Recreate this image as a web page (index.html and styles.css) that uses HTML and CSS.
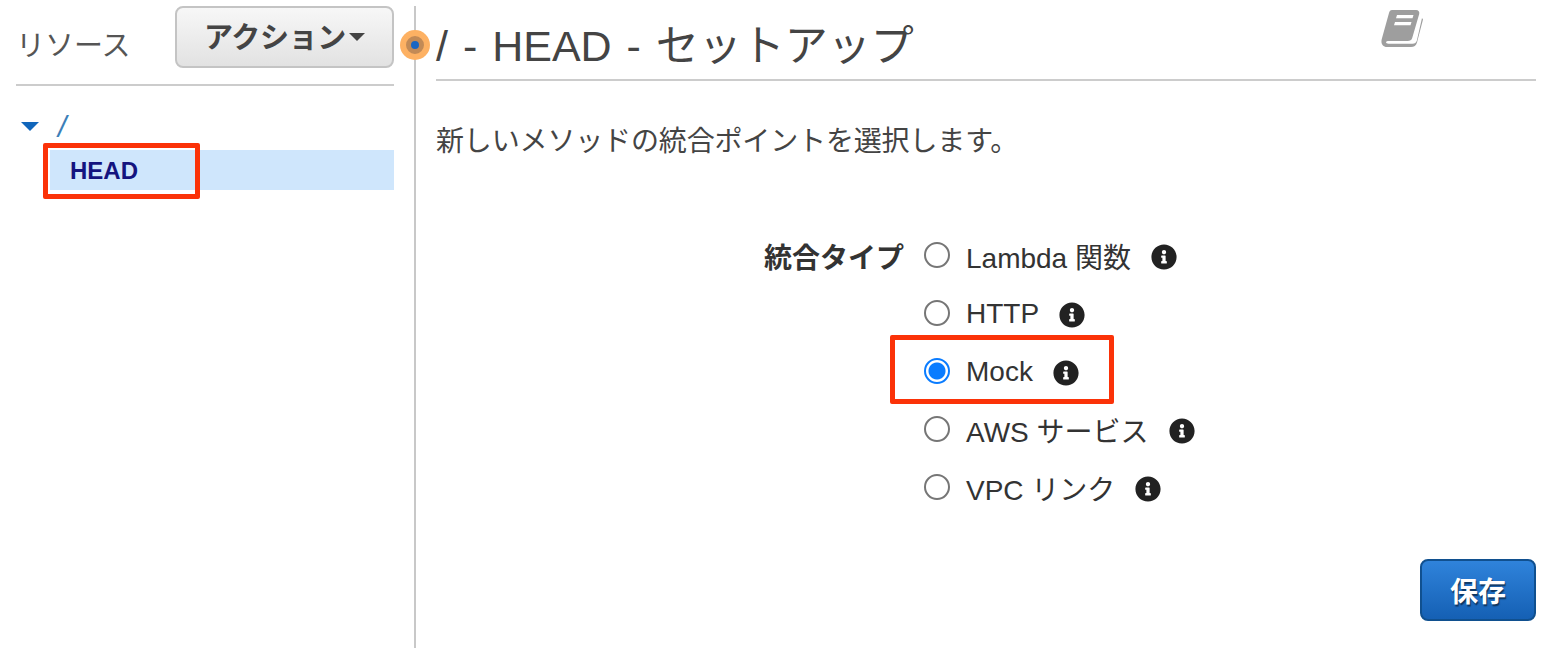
FILE: index.html
```html
<!DOCTYPE html>
<html lang="ja">
<head>
  <meta charset="UTF-8">
  <title>HEAD - セットアップ</title>
  <link rel="stylesheet" href="styles.css">
</head>
<body>
  <svg class="defs" width="0" height="0">
    <symbol id="info" viewBox="0 0 512 512">
      <path d="M256 8C119.043 8 8 119.083 8 256c0 136.997 111.043 248 248 248s248-111.003 248-248C504 119.083 392.957 8 256 8zm0 110c23.196 0 42 18.804 42 42s-18.804 42-42 42-42-18.804-42-42 18.804-42 42-42zm56 254c0 6.627-5.373 12-12 12h-88c-6.627 0-12-5.373-12-12v-24c0-6.627 5.373-12 12-12h12v-64h-12c-6.627 0-12-5.373-12-12v-24c0-6.627 5.373-12 12-12h64c6.627 0 12 5.373 12 12v100h12c6.627 0 12 5.373 12 12v24z"/>
    </symbol>
  </svg>

  <div class="layout">
    <!-- Resources -->
    <div class="sidebar">
      <div class="sidebar-head">
        <span class="sidebar-title">リソース</span>
        <button class="action-btn">アクション<span class="caret"></span></button>
      </div>
      <div class="tree-root">
        <span class="tree-arrow"></span>
        <span class="tree-slash">/</span>
      </div>
      <div class="tree-item">
        <span class="tree-name">HEAD</span>
        <span class="callout callout-head"></span>
      </div>
    </div>

    <!-- Setup -->
    <div class="main">
      <span class="pulse"><span class="pulse-core"></span></span>
      <div class="main-head">
        <h1>/ - HEAD - セットアップ</h1>
        <svg class="book" viewBox="0 0 42 38">
          <path fill="#9e9e9e" d="M11 0h24c2.500 0 3.800 1.800 3.200 4l-7 24c-.7 2.200-2.200 3-4.500 3H7c-2 0-2.500 1.700-1.300 2.300.5.300 1 .4 1.800.4h24c2.400 0 3.600-1 4.300-3L41 8l1 1.500-6 23c-.8 3-3 4.500-6 4.500H6c-3.500 0-6-2.400-5.500-6.500.1-1 .4-2 .7-3L8 3c.5-1.800 1.400-3 3-3z"/>
          <path fill="#fff" d="M16 5h16.500l-1 3.200H15zM14 12h16.500l-1 3.200H13z"/>
        </svg>
      </div>
      <p class="lead">新しいメソッドの統合ポイントを選択します。</p>

      <div class="form">
        <div class="form-label">統合タイプ</div>
        <div class="options">
          <label class="option">
            <input type="radio" name="type">
            <span>Lambda 関数</span>
            <svg class="info"><use href="#info"/></svg>
          </label>
          <label class="option">
            <input type="radio" name="type">
            <span>HTTP</span>
            <svg class="info"><use href="#info"/></svg>
          </label>
          <label class="option">
            <input type="radio" name="type" checked>
            <span>Mock</span>
            <svg class="info"><use href="#info"/></svg>
            <span class="callout callout-mock"></span>
          </label>
          <label class="option">
            <input type="radio" name="type">
            <span>AWS サービス</span>
            <svg class="info"><use href="#info"/></svg>
          </label>
          <label class="option">
            <input type="radio" name="type">
            <span>VPC リンク</span>
            <svg class="info"><use href="#info"/></svg>
          </label>
        </div>
      </div>

      <div class="actions">
        <button class="save-btn">保存</button>
      </div>
    </div>
  </div>
</body>
</html>
```

FILE: styles.css
```css
html, body {
  margin: 0;
  padding: 0;
  height: 100%;
  background: #fff;
  overflow: hidden;
  font-family: "Liberation Sans", "Noto Sans CJK JP", sans-serif;
  color: #444;
}

.defs {
  position: absolute;
}

.layout {
  display: flex;
  height: 648px;
  box-sizing: border-box;
  padding-top: 6px;
}

/* Resources */
.sidebar {
  width: 378px;
  margin-left: 16px;
  margin-right: 20px;
  flex: none;
}

.sidebar-head {
  display: flex;
  justify-content: space-between;
  align-items: flex-start;
  height: 78px;
  border-bottom: 2px solid #ccc;
}

.sidebar-title {
  margin: 19px 0 0;
  font-size: 29px;
  line-height: 42px;
  color: #555;
}

.action-btn {
  display: flex;
  align-items: center;
  justify-content: center;
  width: 219px;
  height: 62px;
  padding: 0 0 5px;
  border: 2px solid #c4c4c4;
  border-radius: 8px;
  background: linear-gradient(to bottom, #f7f7f7, #e2e2e2);
  font-family: inherit;
  font-size: 29px;
  font-weight: bold;
  letter-spacing: -0.3px;
  color: #444;
}

.caret {
  margin: 4px 0 0 3px;
  border-top: 8px solid #444;
  border-left: 8px solid transparent;
  border-right: 8px solid transparent;
}

.tree-root {
  display: flex;
  align-items: center;
  height: 63px;
  padding: 12px 0 0 5px;
  box-sizing: border-box;
}

.tree-arrow {
  margin-top: 6px;
  border-top: 9px solid #1166bb;
  border-left: 9px solid transparent;
  border-right: 9px solid transparent;
}

.tree-slash {
  margin: 6px 0 0 19px;
  font-size: 30px;
  font-style: italic;
  color: #3d7fb8;
}

.tree-item {
  position: relative;
  height: 40px;
  margin-left: 34px;
  margin-top: 1px;
  background: #cfe6fc;
  line-height: 42px;
}

.tree-name {
  margin-left: 20px;
  font-size: 24px;
  font-weight: bold;
  color: #14147f;
}

.callout {
  position: absolute;
  box-sizing: border-box;
  border: 5px solid #fb3208;
  border-radius: 2px;
  pointer-events: none;
}

.callout-head {
  left: -7px;
  top: -7px;
  width: 157px;
  height: 56px;
}

.callout-mock {
  left: -34px;
  top: -8px;
  width: 224px;
  height: 69px;
}

/* Setup */
.main {
  position: relative;
  flex: 1;
  margin-right: 22px;
  padding-left: 20px;
  border-left: 2px solid #c8c8c8;
}

.pulse {
  position: absolute;
  left: -16px;
  top: 24px;
  width: 30px;
  height: 30px;
  display: flex;
  align-items: center;
  justify-content: center;
  border-radius: 50%;
  background: #fdb163;
}

.pulse-core {
  width: 8px;
  height: 8px;
  border: 5px solid #c28a56;
  border-radius: 50%;
  background: #1a66c2;
}

.main-head {
  display: flex;
  justify-content: space-between;
  height: 73px;
  border-bottom: 2px solid #ccc;
}

.main-head h1 {
  margin: 10px 0 0;
  font-size: 43px;
  line-height: 60px;
  font-weight: normal;
  word-spacing: 3px;
  color: #444;
}

.book {
  width: 42px;
  height: 38px;
  margin: 4px 113px 0 0;
}

.lead {
  margin: 42px 0 0;
  font-size: 28px;
  line-height: 38px;
  letter-spacing: -0.15px;
  color: #444;
}

.form {
  display: flex;
  margin-top: 66px;
}

.form-label {
  width: 468px;
  padding-top: 3px;
  text-align: right;
  font-size: 28px;
  font-weight: bold;
  line-height: 58px;
  color: #333;
}

.options {
  margin-left: 20px;
}

.option {
  position: relative;
  display: flex;
  align-items: center;
  height: 58px;
  font-size: 28px;
  color: #333;
}

.option input {
  appearance: none;
  flex: none;
  width: 26px;
  height: 26px;
  margin: -3px 16px 0 0;
  border: 2px solid #767676;
  border-radius: 50%;
  background: #fff;
}

.option input:checked {
  border-color: #0a7cff;
  background: radial-gradient(circle, #0a7cff 0, #0a7cff 8px, #fff 9px);
}

.option .info {
  width: 26px;
  height: 26px;
  margin: 2px 0 0 20px;
  fill: #222;
}

.actions {
  display: flex;
  justify-content: flex-end;
  margin-top: 42px;
}

.save-btn {
  width: 116px;
  height: 62px;
  padding: 0;
  border: 2px solid #10508f;
  border-radius: 8px;
  background: linear-gradient(to bottom, #2f83db, #1560b4);
  font-family: inherit;
  font-size: 28px;
  font-weight: bold;
  color: #fff;
  text-shadow: 1px 2px 1px rgba(0, 0, 0, 0.5);
}
```
